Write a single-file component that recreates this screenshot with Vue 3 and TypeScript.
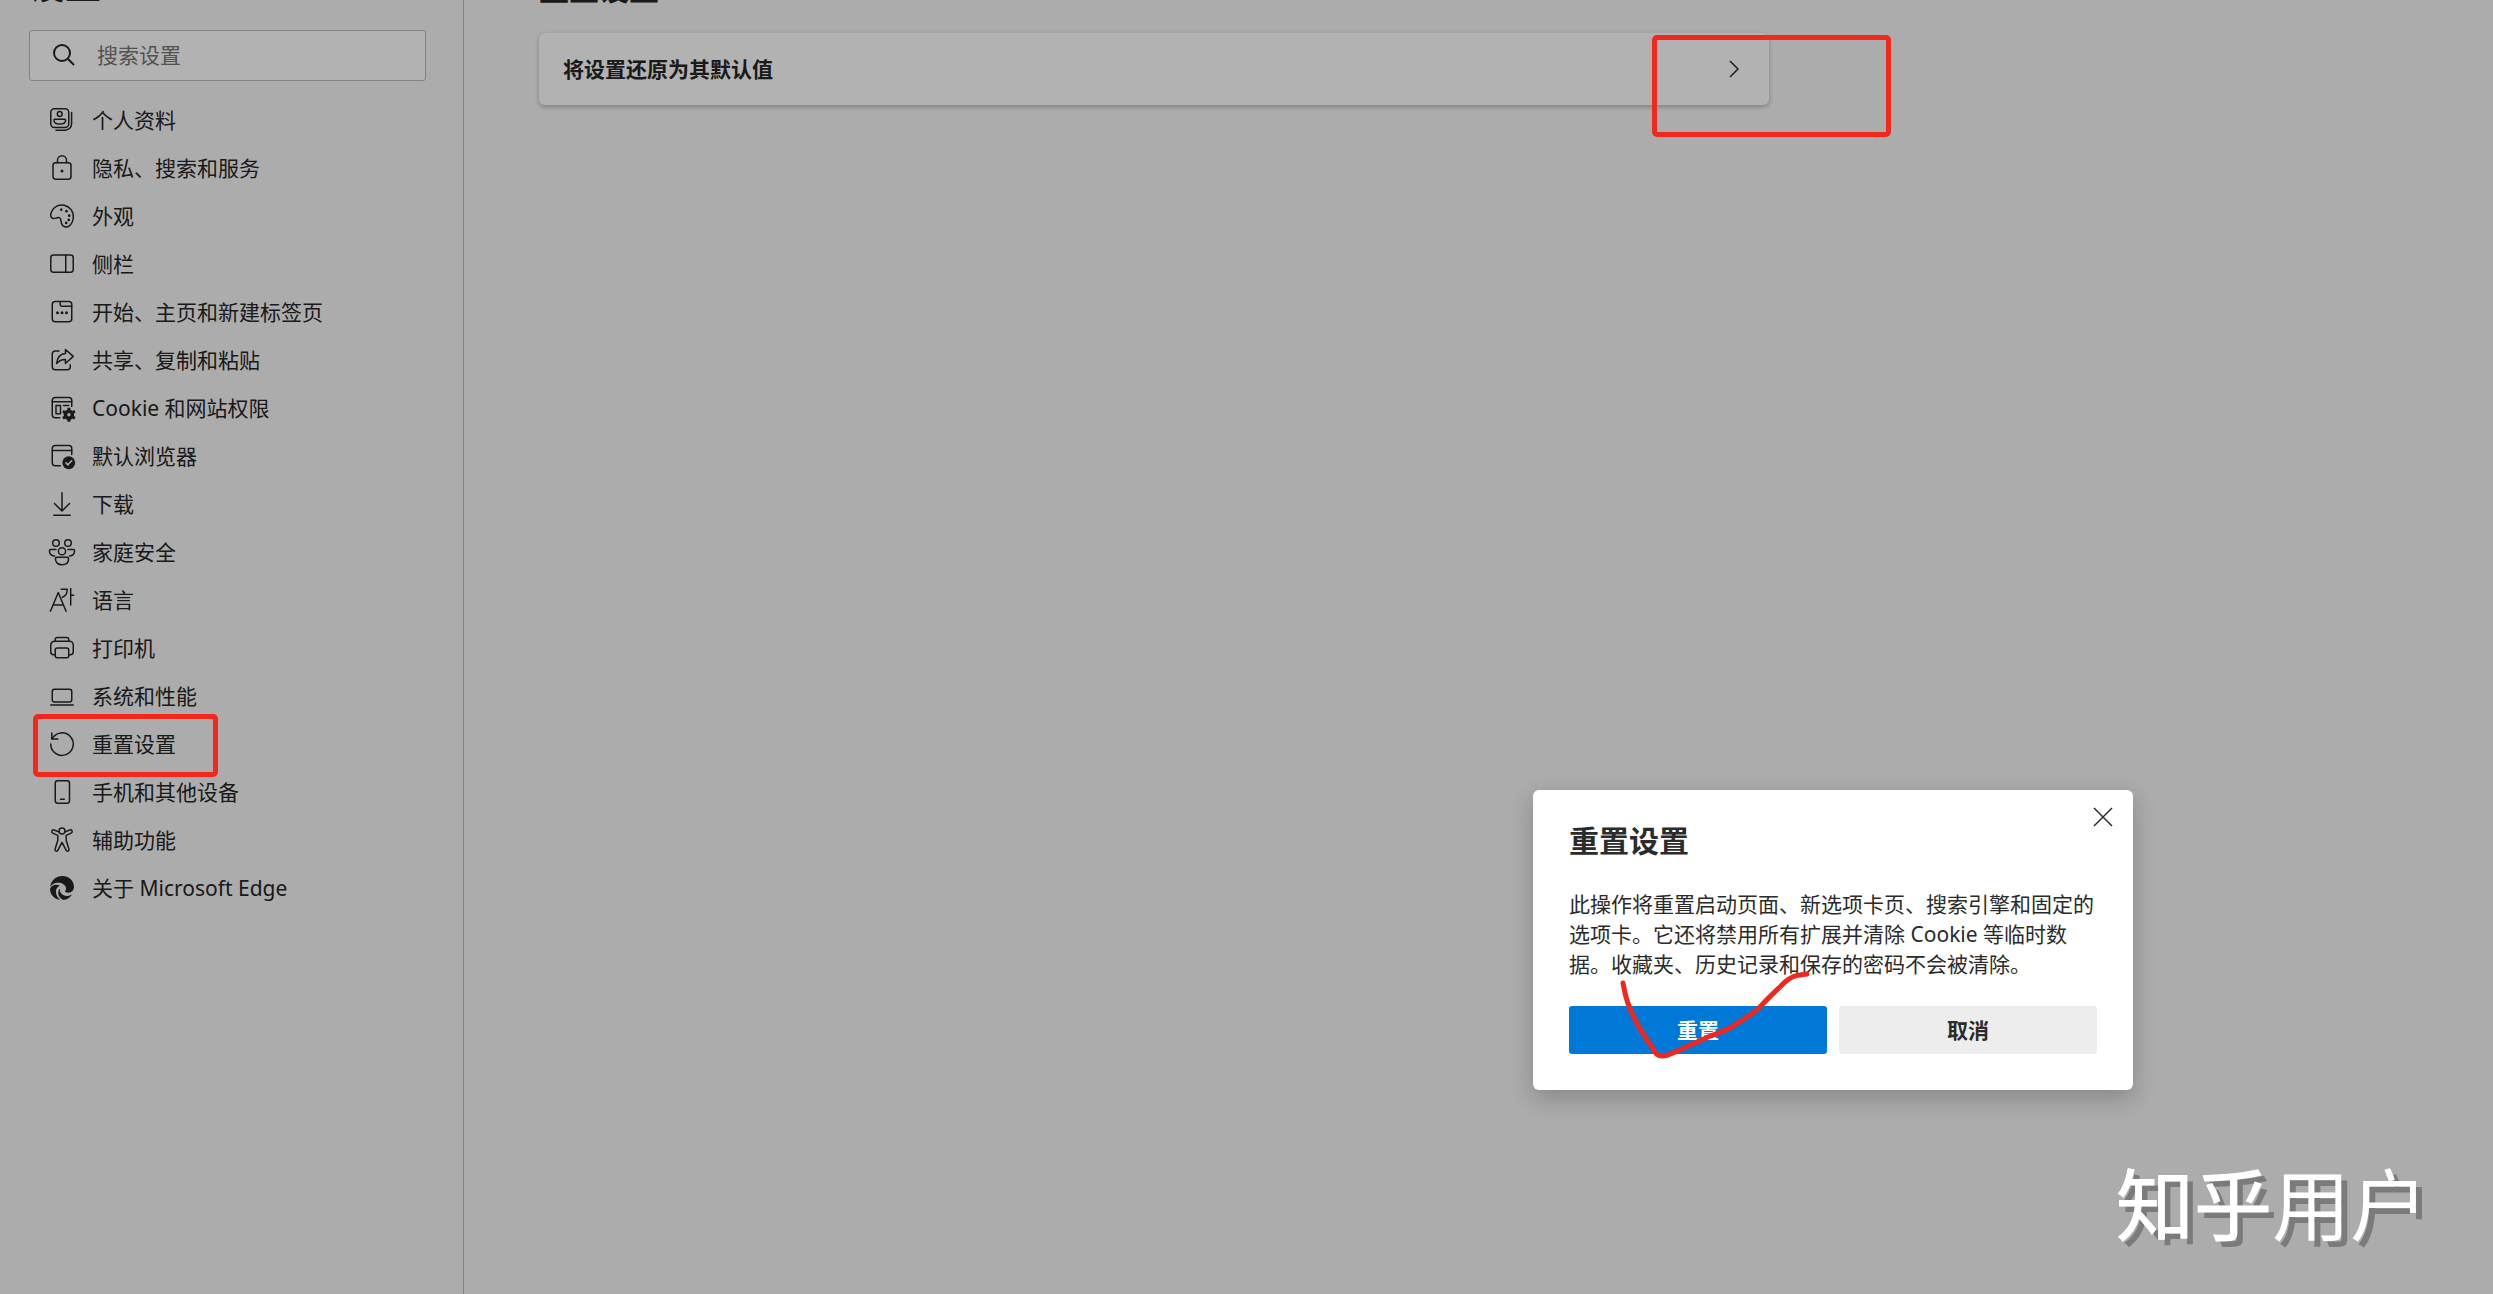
<script setup lang="ts">
interface NavItem {
  label: string
  icon: string
  marked?: boolean
}

const navItems: NavItem[] = [
  {
    label: '个人资料',
    icon: '<rect x="2.500" y="2.500" width="12" height="12.500" rx="2.500"/><circle cx="8.500" cy="6" r="1.600"/><path d="M5.200 9.500h6.600a.6.6 0 0 1 .6.600c0 1.700-1.400 2.600-3.900 2.600s-3.900-.9-3.900-2.600a.6.600 0 0 1 .6-.6z"/><path d="M16.400 5v7.500a4.300 4.300 0 0 1-4.300 4.300H6"/>'
  },
  {
    label: '隐私、搜索和服务',
    icon: '<rect x="4" y="6.500" width="12" height="11" rx="1.800"/><path d="M7 6.500V4.800a3 3 0 0 1 6 0v1.700"/><circle class="solid" cx="10" cy="12" r="1"/>'
  },
  {
    label: '外观',
    icon: '<path d="M3 7.200C4.500 3.700 8 2 11.500 2.800c4 1 6.500 4.500 6 8.700-.4 3.600-2.800 6.400-5.600 5.700-2-.5-2.400-2.400-2.600-4-.2-1.800-.9-2.400-2.300-2.100-1.300.3-2.300 1-3.400.4C2.200 10.800 2.300 8.900 3 7.200z"/><g class="solid"><circle cx="9.500" cy="5.800" r=".9"/><circle cx="13" cy="6.800" r=".9"/><circle cx="14.800" cy="9.800" r=".9"/><circle cx="14.500" cy="12.600" r=".9"/><circle cx="12.800" cy="14.600" r=".9"/></g>'
  },
  {
    label: '侧栏',
    icon: '<rect x="2.500" y="4" width="15" height="11.500" rx="1.800"/><path d="M12.500 4v11.500"/>'
  },
  {
    label: '开始、主页和新建标签页',
    icon: '<rect x="3.500" y="3" width="13" height="13.500" rx="2"/><path d="M8.800 3v2.200c0 .6.300.9.900.9h6.800"/><g class="solid"><circle cx="7" cy="10.500" r="1"/><circle cx="10" cy="10.500" r="1"/><circle cx="13" cy="10.500" r="1"/></g>'
  },
  {
    label: '共享、复制和粘贴',
    icon: '<path d="M8 4H5.500a2 2 0 0 0-2 2v8.500a2 2 0 0 0 2 2h8a2 2 0 0 0 2-2v-1.300"/><path d="M12.300 3v2.700c-3.200.2-5.300 2.400-5.900 6.600 1.700-2 3.500-2.800 5.900-2.700v2.700L17.500 7.600z"/>'
  },
  {
    label: 'Cookie 和网站权限',
    icon: '<path d="M8.500 16.500h-3a2 2 0 0 1-2-2V5a2 2 0 0 1 2-2h9a2 2 0 0 1 2 2v4"/><path d="M3.500 5.800h13M6 8.300h3v5.500H6zM11 8.300h3.500"/><circle cx="14.600" cy="14.500" r="2.300" stroke-width="2.400"/><path stroke-width="2" stroke-linecap="butt" d="M14.600 9.900v2M14.600 17.100v2M10.600 12.200l1.800 1M16.800 15.800l1.800 1M18.600 12.200l-1.800 1M12.400 15.800l-1.800 1"/>'
  },
  {
    label: '默认浏览器',
    icon: '<path d="M9 16.500H5.500a2 2 0 0 1-2-2V5a2 2 0 0 1 2-2h9a2 2 0 0 1 2 2v4"/><path d="M3.500 6.300h13"/><circle class="solid" cx="14.500" cy="14.500" r="4.300"/><path class="cut" d="M12.600 14.600l1.300 1.300 2.600-2.700"/>'
  },
  {
    label: '下载',
    icon: '<path d="M10 2.500v12M5 9.700l5 5 5-5M4.500 17.500h11"/>'
  },
  {
    label: '家庭安全',
    icon: '<circle cx="6" cy="4" r="2.200"/><circle cx="14" cy="4" r="2.200"/><circle cx="10" cy="9.500" r="2.400"/><path d="M6 8.300H2.500c-.6 0-.9.300-.9.900 0 2 1.300 3.300 3.400 3.500M14 8.300h3.500c.6 0 .9.300.9.900 0 2-1.300 3.300-3.400 3.500"/><path d="M6.400 13.500h7.200c.5 0 .8.300.8.800 0 2.700-1.700 4.200-4.400 4.200s-4.400-1.500-4.400-4.200c0-.5.300-.8.800-.8z"/>'
  },
  {
    label: '语言',
    icon: '<path d="M2.300 17.500L7.500 5l5.200 12.500M4 13.300h7"/><path d="M9.500 2.800h4c0 3-1 4.600-3.300 5.400M15.800 2.300v11M15.800 6.800h2"/>'
  },
  {
    label: '打印机',
    icon: '<path d="M5.500 14.500h-1a2 2 0 0 1-2-2V8a2.500 2.500 0 0 1 2.500-2.500h10A2.500 2.500 0 0 1 17.500 8v4.500a2 2 0 0 1-2 2h-1"/><path d="M5.500 5.500V4.300c0-.8.500-1.300 1.300-1.300h6.400c.8 0 1.300.5 1.300 1.300v1.200"/><rect x="5.500" y="10" width="9" height="6.500" rx="1.300"/>'
  },
  {
    label: '系统和性能',
    icon: '<rect x="3.500" y="5.500" width="13" height="8.500" rx="1.500"/><path d="M2.500 16h15"/>'
  },
  {
    label: '重置设置',
    icon: '<path d="M3.200 2.700v4h4"/><path d="M3.400 6.500A7.500 7.500 0 1 1 2.500 10"/>',
    marked: true
  },
  {
    label: '手机和其他设备',
    icon: '<rect x="5.500" y="2.500" width="9.500" height="15" rx="1.600"/><path d="M9 14.800h2.500"/>'
  },
  {
    label: '辅助功能',
    icon: '<path d="M8 4.600L4.700 3.300c-1.500-.4-2.100 1.500-.8 2.100l3.300 1.500v3.400L5.400 16c-.4 1.500 1.300 2 1.900.8L10 11.600l2.700 5.200c.6 1.200 2.300.7 1.900-.8l-1.800-5.700V6.900l3.300-1.500c1.300-.6.700-2.500-.8-2.100L12 4.600"/><circle cx="10" cy="4" r="2"/>'
  },
  {
    label: '关于 Microsoft Edge',
    icon: '<path class="solid" d="M2.100 9.400C2.600 5 6 2 10.200 2c4.400 0 7.600 3 7.800 7.200 0 2.200-1.500 3.900-3.700 3.900-1.300 0-2.400-.5-2.300-1 .7-.8.800-1.500.7-2.100C12.200 7.600 9.700 6.300 6.900 6.500 4.900 6.600 3.100 7.600 2.100 9.400z"/><path class="solid" d="M2 10.600C2.600 9 4 8 6 7.900c1 0 1.900.2 2.600.6-2 .8-3 2.600-2.600 4.800.3 1.900 1.400 3.400 2.900 4.500C5 17.400 2 14.500 2 10.600z"/><path class="solid" d="M8.700 10.300c-.6 2.500 1.400 4.900 4.500 5 1.300 0 2.500-.4 3.500-1-1.400 2.300-3.500 3.600-5.700 3.700-2.300-1.100-3.500-2.800-3.500-4.700 0-1.200.4-2.200 1.200-3z"/>'
  }
]
</script>

<template>
  <div class="page">
    <aside class="sidebar">
      <h1 class="side-title">设置</h1>
      <label class="search">
        <svg class="search-icon" viewBox="0 0 22 22" aria-hidden="true">
          <circle cx="9" cy="9" r="8" />
          <path d="M15 15l6 6" />
        </svg>
        <input type="search" placeholder="搜索设置" aria-label="搜索设置" />
      </label>
      <nav>
        <a v-for="item in navItems" :key="item.label" href="#" class="nav-item">
          <svg class="nav-icon" viewBox="0 0 20 20" aria-hidden="true" v-html="item.icon"></svg>
          <span>{{ item.label }}</span>
          <i v-if="item.marked" class="mark mark-nav"></i>
        </a>
      </nav>
    </aside>

    <main class="content">
      <h2 class="content-title">重置设置</h2>
      <div class="card-wrap">
        <button type="button" class="card">
          <span>将设置还原为其默认值</span>
          <svg class="chevron" viewBox="0 0 20 36" aria-hidden="true"><path d="M2 2l16 16L2 34" /></svg>
        </button>
      </div>
    </main>

    <div class="overlay">
      <section class="dialog" role="dialog" aria-labelledby="dialog-title">
        <button type="button" class="close" aria-label="关闭">
          <svg viewBox="0 0 12 12" aria-hidden="true"><path d="M0 0l12 12M12 0L0 12" /></svg>
        </button>
        <h2 id="dialog-title">重置设置</h2>
        <p>此操作将重置启动页面、新选项卡页、搜索引擎和固定的选项卡。它还将禁用所有扩展并清除 Cookie 等临时数据。收藏夹、历史记录和保存的密码不会被清除。</p>
        <div class="actions">
          <button type="button" class="primary">重置</button>
          <button type="button" class="secondary">取消</button>
        </div>
        <svg class="tick" viewBox="0 0 190 90" aria-hidden="true">
          <path d="M3 13C5 24 6 29 9 36C15 52 24 66 32 77C35 83 37 86 42 86C47 86 51 84 55 82L88 67C96 64 104 61 110 58C121 51 130 46 139 38C149 27 157 20 165 12C171 7 176 5 180 5L187 4" />
        </svg>
      </section>
    </div>

    <i class="mark mark-card"></i>
    <div class="watermark"><span class="brand">知乎</span>用户</div>
  </div>
</template>

<style>
body {
  margin: 0;
  background: #f7f7f7;
}
</style>

<style scoped>
.page {
  position: relative;
  display: flex;
  min-height: 100vh;
  overflow: hidden;
  box-sizing: border-box;
  background: #f7f7f7;
  color: #262626;
  font-family: "Noto Sans", "Noto Sans CJK SC", sans-serif;
  font-size: 21px;
  line-height: 30px;
}

h1,
h2,
p {
  margin: 0;
}

button,
input {
  font: inherit;
  color: inherit;
  border: 0;
  padding: 0;
}

svg {
  display: block;
  flex: none;
  fill: none;
  stroke: currentColor;
}

.sidebar {
  width: 464px;
  flex: none;
  box-sizing: border-box;
  border-right: 1px solid #bababa;
  padding: 0 37px 0 29px;
}

.side-title {
  margin-top: -38px;
  font-size: 36px;
  line-height: 48px;
}

.search {
  display: flex;
  align-items: center;
  height: 51px;
  margin-top: 20px;
  padding: 0 0 2px 23px;
  gap: 22px;
  box-sizing: border-box;
  border: 1px solid #bababa;
  border-radius: 3px;
  background: #fff;
}

.search-icon {
  width: 22px;
  height: 22px;
  stroke-width: 2;
}

.search input {
  flex: 1;
  min-width: 0;
  outline: 0;
  background: none;
  appearance: none;
}

.search input::placeholder {
  color: #767676;
  opacity: 1;
}

nav {
  margin-top: 15px;
}

.nav-item {
  position: relative;
  display: flex;
  align-items: center;
  height: 48px;
  padding-left: 18px;
  gap: 15px;
  color: inherit;
  text-decoration: none;
  white-space: nowrap;
}

.nav-icon {
  width: 30px;
  height: 30px;
  stroke-linecap: round;
  stroke-linejoin: round;
}

.nav-icon :deep(.solid) {
  fill: currentColor;
  stroke: none;
}

.nav-icon :deep(.cut) {
  stroke: #f7f7f7;
}

.content {
  flex: 1;
  min-width: 0;
  padding: 0 75px;
}

.content-title {
  margin-top: -32px;
  font-size: 30px;
  line-height: 42px;
}

.card-wrap {
  max-width: 1230px;
  margin-top: 23px;
}

.card {
  display: flex;
  align-items: center;
  justify-content: space-between;
  width: 100%;
  height: 72px;
  padding: 0 30px 0 24px;
  border-radius: 6px;
  background: #fff;
  box-shadow: 0 2px 5px rgba(0, 0, 0, 0.25);
  font-weight: 700;
}

.chevron {
  width: 10px;
  height: 18px;
  stroke-width: 3;
}

.overlay {
  position: absolute;
  inset: 0;
  display: flex;
  align-items: flex-end;
  justify-content: flex-end;
  padding: 0 360px 204px 0;
  background: rgba(0, 0, 0, 0.3);
}

.dialog {
  position: relative;
  width: 600px;
  box-sizing: border-box;
  padding: 30px 36px 36px;
  border-radius: 6px;
  background: #fff;
  color: #2b2b2b;
  box-shadow: 0 8px 24px rgba(0, 0, 0, 0.22);
}

.dialog h2 {
  font-size: 30px;
  line-height: 42px;
}

.dialog p {
  margin-top: 27px;
}

.close {
  position: absolute;
  top: 12px;
  right: 15px;
  display: flex;
  align-items: center;
  justify-content: center;
  width: 30px;
  height: 30px;
  background: none;
}

.close svg {
  width: 18px;
  height: 18px;
  overflow: visible;
  stroke-width: 1;
}

.actions {
  display: flex;
  gap: 12px;
  margin-top: 27px;
}

.actions button {
  flex: 1;
  height: 48px;
  border-radius: 3px;
  font-weight: 700;
}

.actions .primary {
  background: #0078d7;
  color: #fff;
}

.actions .secondary {
  background: #ededed;
}

.tick {
  position: absolute;
  top: 180px;
  left: 87px;
  width: 190px;
  height: 90px;
  stroke: #ee281e;
  stroke-width: 5;
  stroke-linecap: round;
  stroke-linejoin: round;
  pointer-events: none;
}

.mark {
  position: absolute;
  z-index: 1;
  box-sizing: border-box;
  border: 5px solid #f1281b;
  border-radius: 5px;
  pointer-events: none;
}

.nav-item .mark-nav {
  top: -6px;
  left: 4px;
  width: 185px;
  height: 63px;
}

.mark-card {
  top: 35px;
  left: 1652px;
  width: 239px;
  height: 102px;
}

.watermark {
  position: absolute;
  right: 65px;
  bottom: 44px;
  color: #fff;
  font-size: 78px;
  line-height: 90px;
  text-shadow: 6px 6px 0 #7b7b7b;
}

.brand {
  -webkit-text-stroke: 1px #fff;
}
</style>
